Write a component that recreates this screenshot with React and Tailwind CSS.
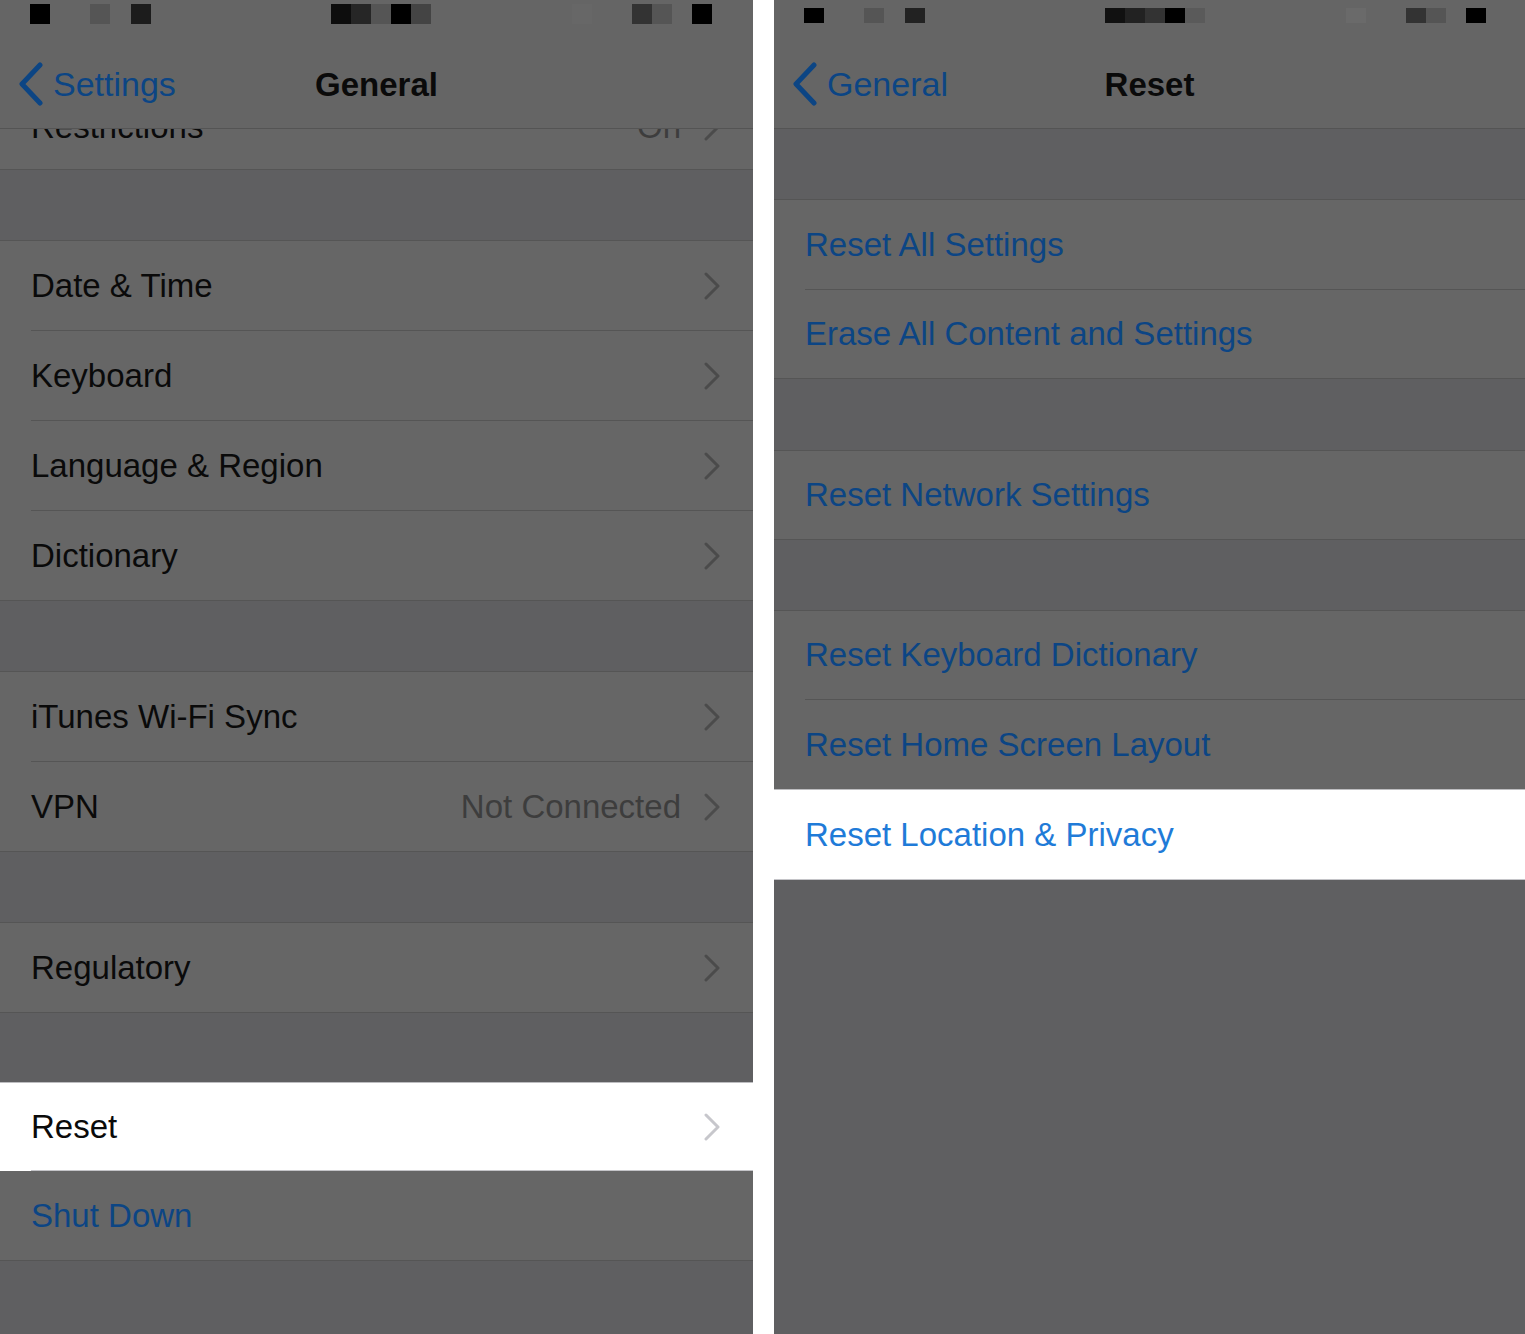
import React from "react";

const font = { fontFamily: '"Liberation Sans", Arial, sans-serif' };

function Blocks({ colors, className }) {
    return (
        <div className={"flex " + className}>
            {colors.map((c, i) => (
                <div key={i} className="w-[20px] h-full" style={{ backgroundColor: c }}></div>
            ))}
        </div>
    );
}

function StatusBar({ left, center, right, top }) {
    return (
        <div className="h-[40px] bg-[#656565]">
            <div className={"flex pl-[30px] " + top}>
                <Blocks colors={[left[0]]} className="h-full" />
                <Blocks colors={[left[1]]} className="ml-[40px] h-full" />
                <Blocks colors={[left[2]]} className="ml-[21px] h-full" />
                <Blocks colors={center} className="ml-[180px] h-full" />
                <Blocks colors={[right[0]]} className="ml-[141px] h-full" />
                <Blocks colors={[right[1], right[2]]} className="ml-[40px] h-full" />
                <Blocks colors={[right[3]]} className="ml-[20px] h-full" />
            </div>
        </div>
    );
}

function Chevron({ light }) {
    return (
        <svg width="18" height="28" viewBox="0 0 18 28" fill="none">
            <path d="M3 2 L15 14 L3 26" stroke={light ? "#c7c7cc" : "#4b4b4b"} strokeWidth="3" strokeLinecap="round" strokeLinejoin="round" />
        </svg>
    );
}

function NavBar({ back, title }) {
    return (
        <div className="grid grid-cols-[1fr_auto_1fr] items-center h-[89px] border-b border-[#545454] bg-[#656565]">
            <div className="flex items-center pl-[18px] gap-[9px] text-[34px] text-[#0c4584]">
                <svg width="26" height="44" viewBox="0 0 26 44" fill="none">
                    <path d="M22 3 L4 22 L22 41" stroke="#0c4584" strokeWidth="5" strokeLinecap="round" strokeLinejoin="round" />
                </svg>
                <span className="leading-none">{back}</span>
            </div>
            <div className="text-[33px] font-bold text-[#0a0a0a] leading-none">{title}</div>
            <div></div>
        </div>
    );
}

function Row({ label, value, blue, white, chevron = true, last, h = "h-[89px]", sep }) {
    const sepColor = sep || (white ? "bg-[#c4c4c8]" : "bg-[#555555]");
    return (
        <div className={white ? "bg-white" : "bg-[#666666]"}>
            <div className={"flex items-center justify-between pl-[31px] pr-[32px] " + h}>
                <span className={"text-[33px] " + (blue ? (white ? "text-[#1f7bd8]" : "text-[#0c4584]") : "text-[#0a0a0a]")}>{label}</span>
                <div className="flex items-center gap-[22px]">
                    {value && <span className="text-[33px] text-[#3d3d3d]">{value}</span>}
                    {chevron && <Chevron light={white} />}
                </div>
            </div>
            <div className={last ? "" : "pl-[31px]"}>
                <div className={"h-px " + sepColor}></div>
            </div>
        </div>
    );
}

function Section({ children, lightTop }) {
    return (
        <div>
            <div className={"h-px " + (lightTop ? "bg-[#bdbdc0]" : "bg-[#555555]")}></div>
            {children}
        </div>
    );
}

function Gap({ h = "h-[70px]" }) {
    return <div className={h + " bg-[#5f5f61]"}></div>;
}

function GeneralPanel() {
    return (
        <div className="w-[753px] h-full bg-[#5f5f61] overflow-hidden">
            <StatusBar
                top="pt-[4px] h-[24px]"
                left={["#000000", "#555555", "#1c1c1c"]}
                center={["#0d0d0d", "#262626", "#555555", "#000000", "#444444"]}
                right={["#676767", "#333333", "#555555", "#000000"]}
            />
            <NavBar back="Settings" title="General" />
            {/* Restrictions row, mostly hidden under the nav bar */}
            <div className="bg-[#666666] h-[40px] overflow-hidden">
                <div className="flex items-center justify-between h-[33px] mt-[-19px] pl-[31px] pr-[32px]">
                    <span className="text-[33px] text-[#0a0a0a] leading-[33px]">Restrictions</span>
                    <div className="flex items-center gap-[22px]">
                        <span className="text-[33px] text-[#3d3d3d] leading-[33px]">On</span>
                        <Chevron />
                    </div>
                </div>
            </div>
            <div className="h-px bg-[#555555]"></div>
            <Gap />
            <Section>
                <Row label="Date & Time" />
                <Row label="Keyboard" />
                <Row label="Language & Region" />
                <Row label="Dictionary" last />
            </Section>
            <Gap />
            <Section>
                <Row label="iTunes Wi-Fi Sync" />
                <Row label="VPN" value="Not Connected" last />
            </Section>
            <Gap />
            <Section>
                <Row label="Regulatory" last />
            </Section>
            <Gap h="h-[69px]" />
            <Section lightTop>
                <Row label="Reset" white h="h-[87px]" />
                <Row label="Shut Down" blue chevron={false} last />
            </Section>
        </div>
    );
}

function ResetPanel() {
    return (
        <div className="flex-1 h-full bg-[#5f5f61] overflow-hidden">
            <StatusBar
                top="pt-[8px] h-[23px]"
                left={["#000000", "#555555", "#222222"]}
                center={["#111111", "#222222", "#333333", "#000000", "#5a5a5a"]}
                right={["#6a6a6a", "#333333", "#555555", "#000000"]}
            />
            <NavBar back="General" title="Reset" />
            <Gap />
            <Section>
                <Row label="Reset All Settings" blue chevron={false} h="h-[89px]" />
                <Row label="Erase All Content and Settings" blue chevron={false} h="h-[88px]" last />
            </Section>
            <Gap h="h-[71px]" />
            <Section>
                <Row label="Reset Network Settings" blue chevron={false} h="h-[88px]" last />
            </Section>
            <Gap h="h-[70px]" />
            <Section>
                <Row label="Reset Keyboard Dictionary" blue chevron={false} h="h-[88px]" />
                <Row label="Reset Home Screen Layout" blue chevron={false} last sep="bg-[#bdbdc0]" />
                <Row label="Reset Location & Privacy" blue white chevron={false} last />
            </Section>
        </div>
    );
}

export default function App() {
    return (
        <div className="flex w-[1525px] h-[1334px] bg-white overflow-hidden" style={font}>
            <GeneralPanel />
            <div className="w-[21px] h-full bg-white"></div>
            <ResetPanel />
        </div>
    );
}
